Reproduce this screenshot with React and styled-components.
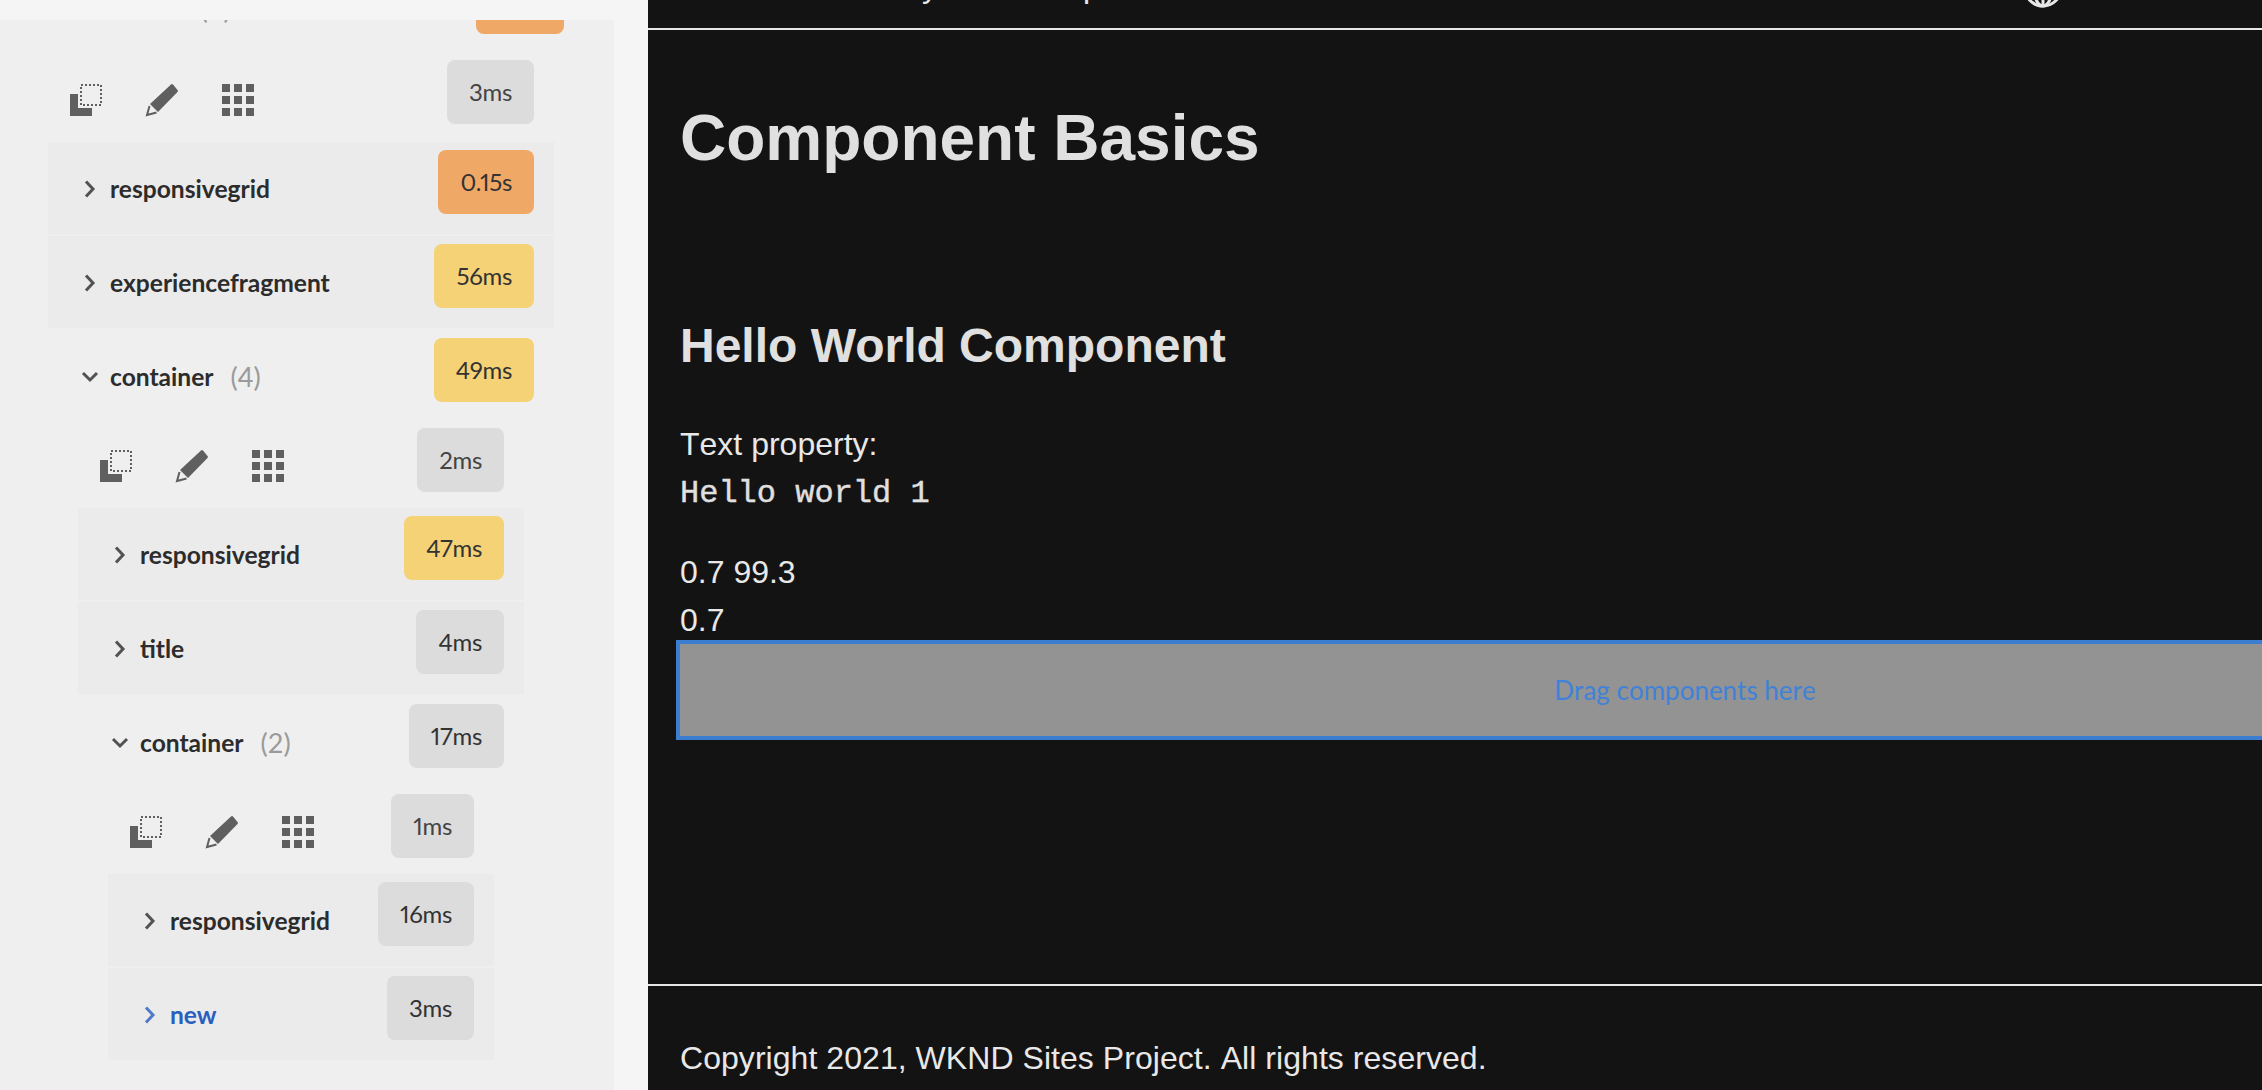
import React from "react";
import styled, { createGlobalStyle } from "styled-components";

const GlobalStyle = createGlobalStyle`
  html, body {
    margin: 0;
    padding: 0;
    height: 100%;
    overflow: hidden;
    background: #131313;
  }
`;

const GRAY = "#dcdcdc";
const ORANGE = "#f0a866";
const YELLOW = "#f6d277";

const tree = {
  name: "container",
  count: 3,
  time: "0.2s",
  tone: ORANGE,
  open: true,
  tool: "3ms",
  toolGap: 16,
  children: [
    { name: "responsivegrid", time: "0.15s", tone: ORANGE },
    { name: "experiencefragment", time: "56ms", tone: YELLOW },
    {
      name: "container",
      count: 4,
      time: "49ms",
      tone: YELLOW,
      open: true,
      tool: "2ms",
      children: [
        { name: "responsivegrid", time: "47ms", tone: YELLOW },
        { name: "title", time: "4ms", tone: GRAY },
        {
          name: "container",
          count: 2,
          time: "17ms",
          tone: GRAY,
          open: true,
          tool: "1ms",
          children: [
            { name: "responsivegrid", time: "16ms", tone: GRAY },
            { name: "new", time: "3ms", tone: GRAY, active: true },
          ],
        },
      ],
    },
  ],
};

function Chevron({ open }) {
  return (
    <ChevronIcon viewBox="0 0 20 20">
      {open ? (
        <path d="M3 6 L10 13 L17 6" />
      ) : (
        <path d="M6 2.5 L13 10 L6 17.5" />
      )}
    </ChevronIcon>
  );
}

function SelectIcon() {
  return (
    <ToolIcon viewBox="0 0 32 32">
      <path d="M0 10 H8 V24 H22 V32 H0 Z" />
      <rect className="dots" x="11" y="1" width="20" height="20" />
    </ToolIcon>
  );
}

function PencilIcon() {
  return (
    <ToolIcon viewBox="0 0 32 32">
      <path d="M4 20 L25 0.5 Q26 -0.5 27 0.5 L31.5 6 Q32.5 7 31.5 8 L12 28 Z" />
      <path className="tip" d="M3.5 22 L1 31 L10.5 28.5" />
    </ToolIcon>
  );
}

function GridIcon() {
  const cells = [0, 12, 24];
  return (
    <ToolIcon viewBox="0 0 32 32">
      {cells.map((y) =>
        cells.map((x) => <rect key={`${x}-${y}`} x={x} y={y} width="8" height="8" />)
      )}
    </ToolIcon>
  );
}

function Branch({ node }) {
  return (
    <BranchWrap>
      <Row $filled={!node.open}>
        <RowLabel $active={node.active}>
          <Chevron open={node.open} />
          <Name>{node.name}</Name>
          {node.count && <Count>({node.count})</Count>}
        </RowLabel>
        <Badge $tone={node.tone}>{node.time}</Badge>
      </Row>
      {node.open && (
        <Children>
          <Toolbar $gap={node.toolGap}>
            <ToolIcons $lift={node.toolGap ? 8 : 10}>
              <SelectIcon />
              <PencilIcon />
              <GridIcon />
            </ToolIcons>
            <ToolBadge $tone={GRAY}>{node.tool}</ToolBadge>
          </Toolbar>
          {node.children.map((child, key) => (
            <Branch node={child} key={key} />
          ))}
        </Children>
      )}
    </BranchWrap>
  );
}

export default function App() {
  return (
    <>
      <GlobalStyle />
      <Page>
        <Sidebar>
          <TopStrip />
          <Panel>
            <Tree>
              <Branch node={tree} />
            </Tree>
          </Panel>
        </Sidebar>
        <Main>
          <Header>
            <NavWord>y</NavWord>
            <NavWord>p</NavWord>
            <Globe viewBox="0 0 40 40">
              <circle cx="20" cy="20" r="18" />
              <ellipse cx="20" cy="20" rx="9" ry="18" />
              <path d="M20 2 V38 M2 20 H38" />
            </Globe>
          </Header>
          <Title>Component Basics</Title>
          <Subtitle>Hello World Component</Subtitle>
          <Para>Text property:</Para>
          <Code>Hello world 1</Code>
          <Numbers>0.7 99.3</Numbers>
          <Para>0.7</Para>
          <DropZone>Drag components here</DropZone>
          <Footer>Copyright 2021, WKND Sites Project. All rights reserved.</Footer>
        </Main>
      </Page>
    </>
  );
}

const Page = styled.div`
  display: flex;
  width: 100%;
  height: 100vh;
  overflow: hidden;
`;
const Sidebar = styled.aside`
  flex: none;
  width: 648px;
  height: 100%;
  display: flex;
  flex-direction: column;
  background: #f5f5f5;
`;
const TopStrip = styled.div`
  flex: none;
  height: 20px;
`;
const Panel = styled.div`
  flex: 1;
  width: 614px;
  min-height: 0;
  overflow: hidden;
  background: #efefef;
`;
const Tree = styled.div`
  margin-top: -58px;
  padding: 0 30px 0 18px;
`;
const BranchWrap = styled.div`
  display: flex;
  flex-direction: column;
`;
const Children = styled.div`
  display: flex;
  flex-direction: column;
  gap: 2px;
  padding: 6px 30px 0;
`;
const Row = styled.div`
  height: 92px;
  display: flex;
  justify-content: space-between;
  align-items: flex-start;
  padding: 8px 20px 0 32px;
  box-sizing: border-box;
  background: ${(p) => (p.$filled ? "#ebebeb" : "transparent")};
`;
const RowLabel = styled.div`
  display: flex;
  align-items: center;
  height: 78px;
  color: ${(p) => (p.$active ? "#2a5fc0" : "#2c2c2c")};
`;
const ChevronIcon = styled.svg`
  flex: none;
  width: 20px;
  height: 20px;
  margin-right: 10px;
  fill: none;
  stroke: currentColor;
  stroke-width: 3;
  opacity: 0.8;
`;
const Name = styled.span`
  font-family: "Lato", sans-serif;
  font-weight: 700;
  font-size: 24.6px;
  line-height: 30px;
`;
const Count = styled.span`
  margin-left: 17px;
  font-family: "Lato", sans-serif;
  font-size: 27px;
  line-height: 30px;
  color: #9a9a9a;
`;
const Badge = styled.div`
  flex: none;
  height: 64px;
  box-sizing: border-box;
  padding: 0 22px 2px;
  display: flex;
  align-items: center;
  border-radius: 8px;
  background: ${(p) => p.$tone};
  font-family: "Lato", sans-serif;
  font-size: 24px;
  font-variant-numeric: proportional-nums;
  letter-spacing: -0.3px;
  color: #333;
`;
const ToolBadge = styled(Badge)`
  color: #444;
`;
const Toolbar = styled.div`
  display: flex;
  justify-content: space-between;
  align-items: flex-end;
  height: 64px;
  margin-bottom: ${(p) => p.$gap || 14}px;
  padding: 0 20px 0 22px;
`;
const ToolIcons = styled.div`
  display: flex;
  gap: 44px;
  padding-bottom: ${(p) => p.$lift}px;
`;
const ToolIcon = styled.svg`
  display: block;
  width: 32px;
  height: 32px;
  fill: #5f5f5f;
  overflow: visible;

  .dots {
    fill: none;
    stroke: #5f5f5f;
    stroke-width: 2;
    stroke-dasharray: 2 2;
  }
  .tip {
    fill: none;
    stroke: #5f5f5f;
    stroke-width: 2;
  }
`;
const Main = styled.main`
  flex: 1;
  min-width: 0;
  height: 100%;
  display: flex;
  flex-direction: column;
  overflow: hidden;
  background: #131313;
  color: #e8e8e8;
  font-family: "Liberation Sans", Arial, sans-serif;
  font-kerning: none;
`;
const Header = styled.header`
  flex: none;
  height: 30px;
  box-sizing: border-box;
  display: flex;
  align-items: flex-end;
  gap: 145px;
  padding: 0 199px 0 274px;
  overflow: hidden;
  border-bottom: 2px solid #e6e6e6;
`;
const NavWord = styled.span`
  margin-bottom: 26px;
  font-size: 32px;
  line-height: 32px;
`;
const Globe = styled.svg`
  flex: none;
  width: 40px;
  height: 40px;
  margin: 0 0 20px auto;
  fill: none;
  stroke: #e6e6e6;
  stroke-width: 3;
`;
const Title = styled.h1`
  margin: 72px 32px 0;
  font-size: 64px;
  line-height: 72px;
  font-weight: 700;
  font-kerning: normal;
  color: #e0e0e0;
`;
const Subtitle = styled.h2`
  margin: 144px 32px 0;
  font-size: 48px;
  line-height: 56px;
  font-weight: 700;
  font-kerning: normal;
  color: #e0e0e0;
`;
const Para = styled.p`
  margin: 46px 32px 0;
  font-size: 32px;
  line-height: 48px;

  & + & {
    margin-top: 0;
  }
`;
const Code = styled.code`
  display: block;
  margin: 0 32px;
  padding-top: 3px;
  font-family: "Liberation Mono", "Courier New", monospace;
  font-size: 32px;
  line-height: 45px;
  -webkit-text-stroke: 0.4px #e0e0e0;
  color: #e0e0e0;
`;
const Numbers = styled(Para)`
  margin-top: 32px;
  margin-bottom: 0;

  & + p {
    margin-top: 0;
  }
`;
const DropZone = styled.div`
  flex: none;
  width: 2018px;
  height: 100px;
  box-sizing: border-box;
  margin: -4px 0 0 28px;
  display: flex;
  align-items: center;
  justify-content: center;
  background: #939393;
  border: 4px solid #3b7dd0;
  font-family: "Lato", sans-serif;
  font-size: 26px;
  color: #3f82d8;
`;
const Footer = styled.footer`
  flex: none;
  margin-top: auto;
  height: 106px;
  box-sizing: border-box;
  padding: 48px 32px 0;
  border-top: 2px solid #e6e6e6;
  font-size: 32px;
  line-height: 48px;
  letter-spacing: 0.05px;
`;
